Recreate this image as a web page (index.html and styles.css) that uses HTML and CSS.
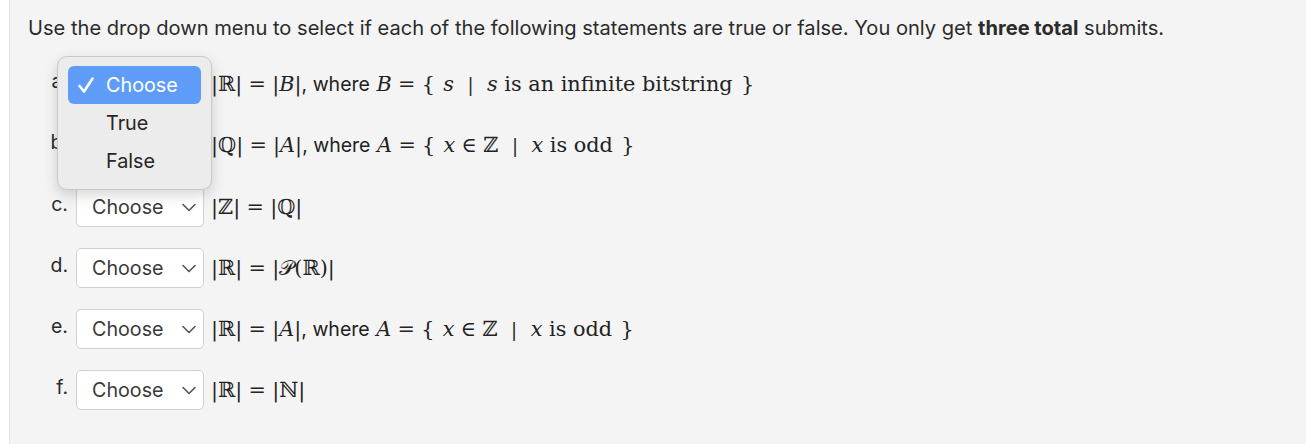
FILE: index.html
```html
<!DOCTYPE html>
<html lang="en">

<head>
    <meta charset="UTF-8">
    <meta name="viewport" content="width=device-width, initial-scale=1.0">
    <title>True or false</title>
    <link rel="stylesheet" href="styles.css">
</head>

<body>
    <div class="panel">
        <p class="intro">Use the drop down menu to select if each of the following statements are true or false. You only get <strong>three total</strong> submits.</p>

        <div class="rows">
            <div class="row">
                <span class="label">a.</span>
                <div class="pick">
                    <div class="select">
                        <span>Choose</span>
                        <svg class="chev" width="14" height="9" viewBox="0 0 14 9"><path d="M1 1.5 L7 7.5 L13 1.5" fill="none" stroke="#555" stroke-width="1.6" stroke-linecap="round" stroke-linejoin="round"/></svg>
                    </div>
                    <!-- open dropdown list -->
                    <div class="menu">
                        <div class="opt active">
                            <svg class="tick" width="18" height="18" viewBox="0 0 18 18"><path d="M2.5 10 L7 15.5 L15.5 2.5" fill="none" stroke="#fff" stroke-width="2.6" stroke-linecap="round" stroke-linejoin="round"/></svg>
                            Choose
                        </div>
                        <div class="opt">True</div>
                        <div class="opt">False</div>
                    </div>
                </div>
                <span class="math">|<span class="bb">ℝ</span>|<span class="rel">=</span>|<i>B</i>|<span class="txt">, where</span> <i>B</i><span class="rel">=</span><span class="br">{</span><i>s</i><span class="mid">|</span><i>s</i> is an infinite bitstring<span class="br r">}</span></span>
            </div>

            <div class="row">
                <span class="label">b.</span>
                <div class="select">
                    <span>Choose</span>
                    <svg class="chev" width="14" height="9" viewBox="0 0 14 9"><path d="M1 1.5 L7 7.5 L13 1.5" fill="none" stroke="#555" stroke-width="1.6" stroke-linecap="round" stroke-linejoin="round"/></svg>
                </div>
                <span class="math">|<span class="bb">ℚ</span>|<span class="rel">=</span>|<i>A</i>|<span class="txt">, where</span> <i>A</i><span class="rel">=</span><span class="br">{</span><i>x</i><span class="rel">∈</span><span class="bb">ℤ</span><span class="mid">|</span><i>x</i> is odd<span class="br r">}</span></span>
            </div>

            <div class="row">
                <span class="label">c.</span>
                <div class="select">
                    <span>Choose</span>
                    <svg class="chev" width="14" height="9" viewBox="0 0 14 9"><path d="M1 1.5 L7 7.5 L13 1.5" fill="none" stroke="#555" stroke-width="1.6" stroke-linecap="round" stroke-linejoin="round"/></svg>
                </div>
                <span class="math">|<span class="bb">ℤ</span>|<span class="rel">=</span>|<span class="bb">ℚ</span>|</span>
            </div>

            <div class="row">
                <span class="label">d.</span>
                <div class="select">
                    <span>Choose</span>
                    <svg class="chev" width="14" height="9" viewBox="0 0 14 9"><path d="M1 1.5 L7 7.5 L13 1.5" fill="none" stroke="#555" stroke-width="1.6" stroke-linecap="round" stroke-linejoin="round"/></svg>
                </div>
                <span class="math">|<span class="bb">ℝ</span>|<span class="rel">=</span>|<span class="scr">𝒫</span>(<span class="bb">ℝ</span>)|</span>
            </div>

            <div class="row">
                <span class="label">e.</span>
                <div class="select">
                    <span>Choose</span>
                    <svg class="chev" width="14" height="9" viewBox="0 0 14 9"><path d="M1 1.5 L7 7.5 L13 1.5" fill="none" stroke="#555" stroke-width="1.6" stroke-linecap="round" stroke-linejoin="round"/></svg>
                </div>
                <span class="math">|<span class="bb">ℝ</span>|<span class="rel">=</span>|<i>A</i>|<span class="txt">, where</span> <i>A</i><span class="rel">=</span><span class="br">{</span><i>x</i><span class="rel">∈</span><span class="bb">ℤ</span><span class="mid">|</span><i>x</i> is odd<span class="br r">}</span></span>
            </div>

            <div class="row">
                <span class="label">f.</span>
                <div class="select">
                    <span>Choose</span>
                    <svg class="chev" width="14" height="9" viewBox="0 0 14 9"><path d="M1 1.5 L7 7.5 L13 1.5" fill="none" stroke="#555" stroke-width="1.6" stroke-linecap="round" stroke-linejoin="round"/></svg>
                </div>
                <span class="math">|<span class="bb">ℝ</span>|<span class="rel">=</span>|<span class="bb">ℕ</span>|</span>
            </div>
        </div>
    </div>
</body>

</html>
```

FILE: styles.css
```css
body {
    margin: 0;
    background-color: #fff;
    font-family: Inter, "Noto Sans", sans-serif;
    color: #2b2b2b;
}

.panel {
    margin-left: 9px;
    height: 444px;
    box-sizing: border-box;
    border-left: 1px solid #e3e3e3;
    background-color: #f4f4f4;
    padding: 15px 18px 0 18px;
}

.intro {
    margin: 0;
    font-size: 20.1px;
    line-height: 26px;
}

.intro strong {
    font-weight: 700;
}

.rows {
    margin-top: 23px;
    display: flex;
    flex-direction: column;
    gap: 21.3px;
}

.row {
    display: flex;
    align-items: center;
    height: 40px;
}

.label {
    width: 40px;
    text-align: right;
    margin-right: 8px;
    font-size: 19.5px;
    position: relative;
    top: -3px;
}

.pick {
    position: relative;
}

.select {
    width: 128px;
    height: 40px;
    box-sizing: border-box;
    background-color: #fff;
    border: 1px solid #cfd2d4;
    border-radius: 5px;
    display: flex;
    align-items: center;
    justify-content: space-between;
    padding: 0 7px 0 15px;
    font-size: 19.7px;
    color: #3a3a3a;
}

.chev {
    margin-top: 1px;
}

.math {
    margin-left: 7px;
    font-family: "DejaVu Serif", serif;
    font-size: 20.8px;
    color: #222;
    white-space: pre;
}

.math i {
    font-style: italic;
}

.rel {
    margin: 0 0.3em;
}

.mid {
    margin: 0 0.75em;
    font-size: 18px;
}

.br {
    margin-right: 0.4em;
}

.br.r {
    margin-right: 0;
    margin-left: 0.4em;
}

.bb {
    font-family: "DejaVu Serif", serif;
}

.scr {
    font-family: "DejaVu Serif", "DejaVu Sans", serif;
}

.txt {
    font-family: Inter, "Noto Sans", sans-serif;
    font-size: 19.5px;
}

.menu {
    position: absolute;
    z-index: 10;
    left: -19px;
    top: -8px;
    width: 155px;
    height: 134px;
    box-sizing: border-box;
    padding: 9px 10px;
    background-color: #ececec;
    border: 1px solid #c9c9c9;
    border-radius: 10px;
    box-shadow: 0 5px 14px rgba(0, 0, 0, 0.16);
}

.opt {
    height: 38px;
    display: flex;
    align-items: center;
    padding-left: 38px;
    font-size: 19.8px;
    color: #262626;
    border-radius: 6px;
    position: relative;
}

.opt.active {
    background-color: #5e9cf7;
    color: #fff;
}

.tick {
    position: absolute;
    left: 9px;
    top: 10px;
}
```
